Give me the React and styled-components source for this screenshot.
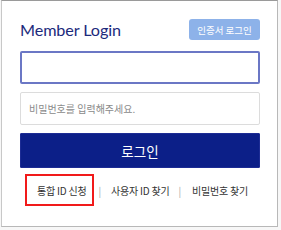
import React from "react";
import styled, { createGlobalStyle } from "styled-components";

const Global = createGlobalStyle`
  html, body { margin: 0; padding: 0; background: #ffffff; }
  body { font-family: "Noto Sans", "Noto Sans CJK KR", sans-serif; }
`;

const Page = styled.div`
  width: 281px;
  height: 230px;
  background: #f7f7f7;
  overflow: hidden;
`;

const Card = styled.div`
  box-sizing: border-box;
  margin-left: 1px;
  width: 277px;
  height: 227px;
  background: #ffffff;
  border-top: 1px solid #9a9a9a;
  border-left: 1px solid #c8c8c8;
  border-right: 1px solid #b8b8b8;
  border-bottom: 1px solid #b8b8b8;
  padding: 18px 17px 0 18px;
  display: flex;
  flex-direction: column;
`;

const Header = styled.div`
  display: flex;
  align-items: center;
  justify-content: space-between;
  height: 21px;
  margin-bottom: 11px;
`;

const Title = styled.h1`
  margin: 0;
  font-family: Lato, "Noto Sans", sans-serif;
  font-size: 16.2px;
  font-weight: 400;
  color: #1c2a7c;
  letter-spacing: -0.1px;
`;

const CertButton = styled.button`
  width: 71px;
  height: 21px;
  padding: 0;
  border: none;
  border-radius: 3px;
  background: #8db2e9;
  color: #ffffff;
  font-family: "Noto Sans CJK KR", sans-serif;
  font-size: 9.5px;
`;

const Field = styled.input`
  box-sizing: border-box;
  width: 240px;
  height: 33px;
  margin: 0 0 8px 0;
  padding: 0 8px;
  border: ${(p) => (p.$active ? "2px solid #6b77c5" : "1px solid #dcdcdc")};
  border-radius: 2px;
  font-family: "Noto Sans CJK KR", sans-serif;
  font-size: 10px;
  color: #333;
  outline: none;
  background: #fff;
  &::placeholder { color: #8a8a8a; }
`;

const LoginButton = styled.button`
  box-sizing: border-box;
  width: 240px;
  height: 35px;
  border: 1px solid #1d2c94;
  border-radius: 1px;
  background: #0c1f88;
  color: #ffffff;
  font-family: "Noto Sans CJK KR", sans-serif;
  font-size: 13.5px;
  padding: 0;
`;

const Links = styled.div`
  display: flex;
  align-items: center;
  margin-top: 6px;
  margin-left: 5px;
  font-family: "Noto Sans CJK KR", sans-serif;
  font-size: 10px;
  letter-spacing: -0.2px;
  color: #333;
`;

const LinkItem = styled.a`
  box-sizing: border-box;
  display: flex;
  align-items: center;
  height: 32px;
  color: #333;
  text-decoration: none;
  white-space: nowrap;
  ${(p) =>
    p.$highlight
      ? `border: 2px solid #f11a1a; padding: 1px 5px 0 10px;`
      : `padding: 1px 0 0 0;`}
`;

const Sep = styled.span`
  color: #a8a8a8;
  margin: 0 ${(p) => p.$r}px 0 ${(p) => p.$l}px;
  font-size: 10px;
`;

export default function App() {
  return (
    <Page>
      <Global />
      <Card>
        <Header>
          <Title>Member Login</Title>
          <CertButton>인증서 로그인</CertButton>
        </Header>
        <Field $active />
        <Field type="password" placeholder="비밀번호를 입력해주세요." />
        <LoginButton>로그인</LoginButton>
        <Links>
          <LinkItem $highlight href="#">통합 ID 신청</LinkItem>
          <Sep $l={5} $r={10}>|</Sep>
          <LinkItem href="#">사용자 ID 찾기</LinkItem>
          <Sep $l={9} $r={11}>|</Sep>
          <LinkItem href="#">비밀번호 찾기</LinkItem>
        </Links>
      </Card>
    </Page>
  );
}
